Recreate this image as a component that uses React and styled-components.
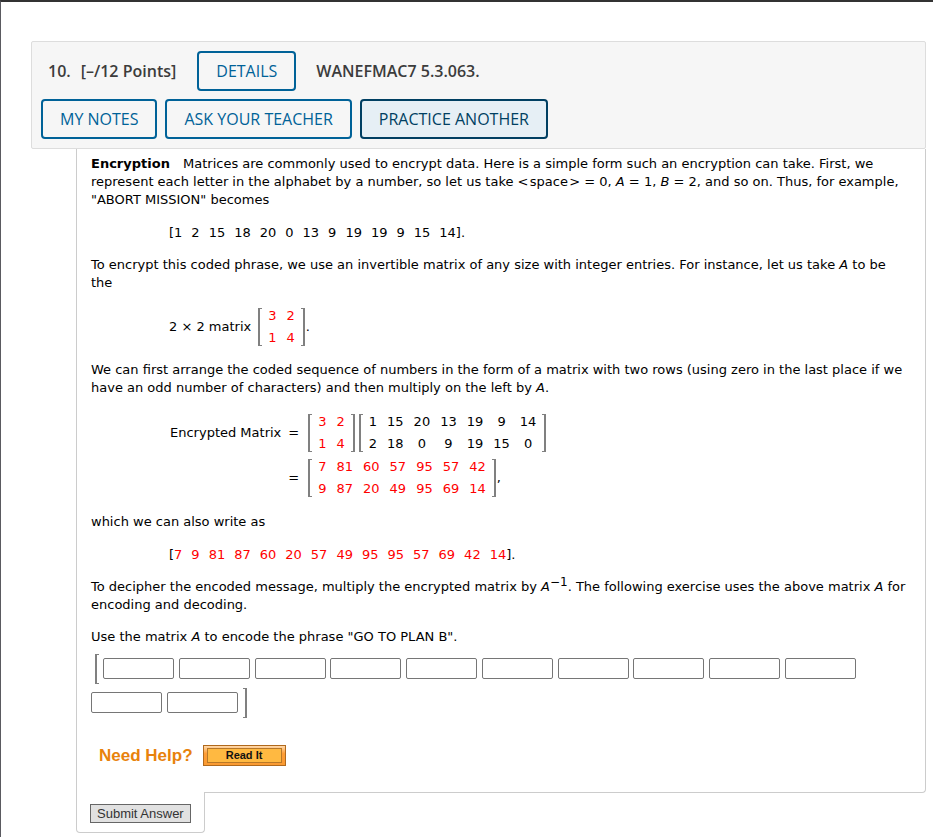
import styled, { createGlobalStyle, css } from 'styled-components';

const GlobalStyle = createGlobalStyle`
  * {
    box-sizing: border-box;
  }

  html {
    min-height: 100%;
    border-top: 2px solid #333;
    border-left: 1px solid #5a5a60;
    background: #fff;
  }

  body {
    margin: 0;
    color: #000;
    font-family: Verdana, 'DejaVu Sans', sans-serif;
    font-size: 13px;
    line-height: 18px;
  }
`;

const Page = styled.main`
  padding: 39px 7px 4px 30px;
`;

const Header = styled.header`
  display: grid;
  gap: 8px;
  padding: 9px;
  border: 1px solid #ddd;
  border-radius: 2px;
  background: #f6f6f6;
  color: #3c3c3c;
  font-family: 'Open Sans', sans-serif;
  font-size: 16px;
  line-height: 24px;
`;

const HeaderRow = styled.div`
  display: flex;
  flex-wrap: wrap;
  align-items: center;
  gap: 8px;
`;

const Title = styled.h2`
  display: flex;
  gap: 10px;
  margin: 0 13px 0 7px;
  font-size: 16px;
  font-weight: 600;
`;

const Code = styled.strong`
  margin-left: 12px;
  font-weight: 600;
`;

const HeaderButton = styled.button`
  height: 40px;
  padding: 0 17px;
  border: 2px solid #006298;
  border-radius: 4px;
  background: transparent;
  color: #006298;
  font: inherit;
  cursor: pointer;

  ${({ $active }) =>
    $active &&
    css`
      border-color: #003f62;
      background: #e6eff5;
      color: #003f62;
    `};
`;

const Content = styled.section`
  display: grid;
  gap: 14px;
  margin-left: 45px;
  padding: 6px 14px 26px;
  border: 1px solid #ccc;
  border-top: none;
  border-radius: 0 0 4px 0;
`;

const Text = styled.p`
  margin: 0;
`;

const Term = styled.b`
  margin-right: 9px;
`;

const Power = styled.sup`
  font-size: 12px;
  line-height: 0;
`;

const Indented = styled.div`
  display: flex;
  align-items: center;
  gap: ${({ $gap }) => $gap || 0}px;
  padding: 1px 0 0 78px;
`;

const Red = styled.span`
  color: #f00;
`;

const Equations = styled.div`
  display: grid;
  grid-template-columns: auto auto 1fr;
  align-items: center;
  gap: 5px 7px;
  padding: 2px 0 1px 79px;
`;

const Product = styled.div`
  display: flex;
  align-items: center;
  gap: 4px;
  padding-left: 2px;
`;

const Bracketed = styled.div`
  display: flex;
  align-items: center;
  gap: 1px;
  margin: -2px 0;
`;

const Bracket = styled.span`
  display: inline-block;
  width: 4px;
  height: ${({ $height }) => $height || 38}px;
  border: 1px solid #808080;
  border-width: ${({ $right }) => ($right ? '1px 2px 1px 0' : '1px 0 1px 2px')};
  vertical-align: middle;
`;

const Cells = styled.table`
  border-collapse: collapse;
  color: ${({ $red }) => ($red ? '#f00' : '#000')};

  td {
    padding: 2px 5px;
    text-align: center;
  }
`;

const Answers = styled.div`
  margin-top: -9px;
  font-size: 15px;
  line-height: 34px;
`;

const AnswerInput = styled.input`
  width: 71px;
  height: 21px;
  padding: 1px 2px;
  border: 1px solid #767676;
  border-radius: 2px;
  font: 13px 'Liberation Sans', sans-serif;
  vertical-align: middle;
`;

const Start = styled.span`
  margin: 0 4px;
`;

const Help = styled.div`
  display: flex;
  align-items: center;
  gap: 10px;
  padding: 12px 0 0 8px;
`;

const HelpLabel = styled.b`
  color: #e8820c;
  font: bold 17px/20px 'Liberation Sans', Arial, sans-serif;
`;

const ReadButton = styled.button`
  width: 83px;
  height: 21px;
  padding: 2px 3px;
  border: 1px solid #b0691c;
  background: linear-gradient(#ffd9ab, #ff9d35 40%, #f99a32);
  cursor: pointer;

  span {
    display: block;
    border: 1px solid #b87828;
    background: #ffb941;
    color: #111;
    font: bold 11px/13px 'Liberation Sans', Arial, sans-serif;
  }
`;

const Footer = styled.footer`
  position: relative;
  width: fit-content;
  margin: -1px 0 0 45px;
  padding: 12px 13px 9px;
  border: 1px solid #ccc;
  border-top: none;
  border-radius: 0 0 4px 4px;
  background: #fff;
`;

const SubmitButton = styled.button`
  display: block;
  height: 19px;
  padding: 0 6px;
  border: 1px solid #666;
  background: #e1e1e1;
  color: #333;
  font: 13px/17px 'Liberation Sans', Arial, sans-serif;
  cursor: pointer;
`;

const key = [
  [3, 2],
  [1, 4],
];

const message = [
  [1, 15, 20, 13, 19, 9, 14],
  [2, 18, 0, 9, 19, 15, 0],
];

const encrypted = [
  [7, 81, 60, 57, 95, 57, 42],
  [9, 87, 20, 49, 95, 69, 14],
];

const plainCode = [1, 2, 15, 18, 20, 0, 13, 9, 19, 19, 9, 15, 14];
const secretCode = [7, 9, 81, 87, 60, 20, 57, 49, 95, 95, 57, 69, 42, 14];
const answers = Array.from({ length: 12 }, (_, index) => index + 1);

const Matrix = ({ rows, red, after }) => (
  <Bracketed>
    <Bracket />
    <Cells $red={red}>
      <tbody>
        {rows.map((row, y) => (
          <tr key={y}>
            {row.map((value, x) => (
              <td key={x}>{value}</td>
            ))}
          </tr>
        ))}
      </tbody>
    </Cells>
    <Bracket $right />
    {after}
  </Bracketed>
);

const Sequence = ({ values, red }) => (
  <Indented $gap={9}>
    {values.map((value, index) => (
      <span key={index}>
        {index === 0 && '['}
        {red ? <Red>{value}</Red> : value}
        {index === values.length - 1 && '].'}
      </span>
    ))}
  </Indented>
);

const App = () => (
  <>
    <GlobalStyle />
    <Page>
      <Header>
        <HeaderRow>
          <Title>
            <span>10.</span>
            <span>[–/12 Points]</span>
          </Title>
          <HeaderButton>DETAILS</HeaderButton>
          <Code>WANEFMAC7 5.3.063.</Code>
        </HeaderRow>
        <HeaderRow>
          <HeaderButton>MY NOTES</HeaderButton>
          <HeaderButton>ASK YOUR TEACHER</HeaderButton>
          <HeaderButton $active>PRACTICE ANOTHER</HeaderButton>
        </HeaderRow>
      </Header>

      <Content>
        <Text>
          <Term>Encryption</Term> Matrices are commonly used to encrypt data. Here is a simple form
          such an encryption can take. First, we represent each letter in the alphabet by a number,
          so let us take &lt;&#8202;space&#8202;&gt; = 0, <i>A</i> = 1, <i>B</i> = 2, and so on.
          Thus, for example, "ABORT MISSION" becomes
        </Text>
        <Sequence values={plainCode} />
        <Text>
          To encrypt this coded phrase, we use an invertible matrix of any size with integer
          entries. For instance, let us take <i>A</i> to be the
        </Text>
        <Indented $gap={7}>
          <span>2 × 2 matrix</span>
          <Matrix rows={key} red after="." />
        </Indented>
        <Text>
          We can first arrange the coded sequence of numbers in the form of a matrix with two rows
          (using zero in the last place if we have an odd number of characters) and then multiply
          on the left by <i>A</i>.
        </Text>
        <Equations>
          <span>Encrypted Matrix</span>
          <span>=</span>
          <Product>
            <Matrix rows={key} red />
            <Matrix rows={message} />
          </Product>
          <span />
          <span>=</span>
          <Product>
            <Matrix rows={encrypted} red after="," />
          </Product>
        </Equations>
        <Text>which we can also write as</Text>
        <Sequence values={secretCode} red />
        <Text>
          To decipher the encoded message, multiply the encrypted matrix by <i>A</i>
          <Power>−1</Power>. The following exercise uses the above matrix <i>A</i> for encoding and
          decoding.
        </Text>
        <Text>
          Use the matrix <i>A</i> to encode the phrase "GO TO PLAN B".
        </Text>
        <Answers>
          <Start>
            <Bracket $height={30} />
          </Start>
          {answers.map((number) => (
            <span key={number}>
              <AnswerInput aria-label={`Entry ${number}`} />{' '}
            </span>
          ))}
          <Bracket $height={30} $right />
        </Answers>
        <Help>
          <HelpLabel>Need Help?</HelpLabel>
          <ReadButton>
            <span>Read It</span>
          </ReadButton>
        </Help>
      </Content>
      <Footer>
        <SubmitButton>Submit Answer</SubmitButton>
      </Footer>
    </Page>
  </>
);

export default App;
